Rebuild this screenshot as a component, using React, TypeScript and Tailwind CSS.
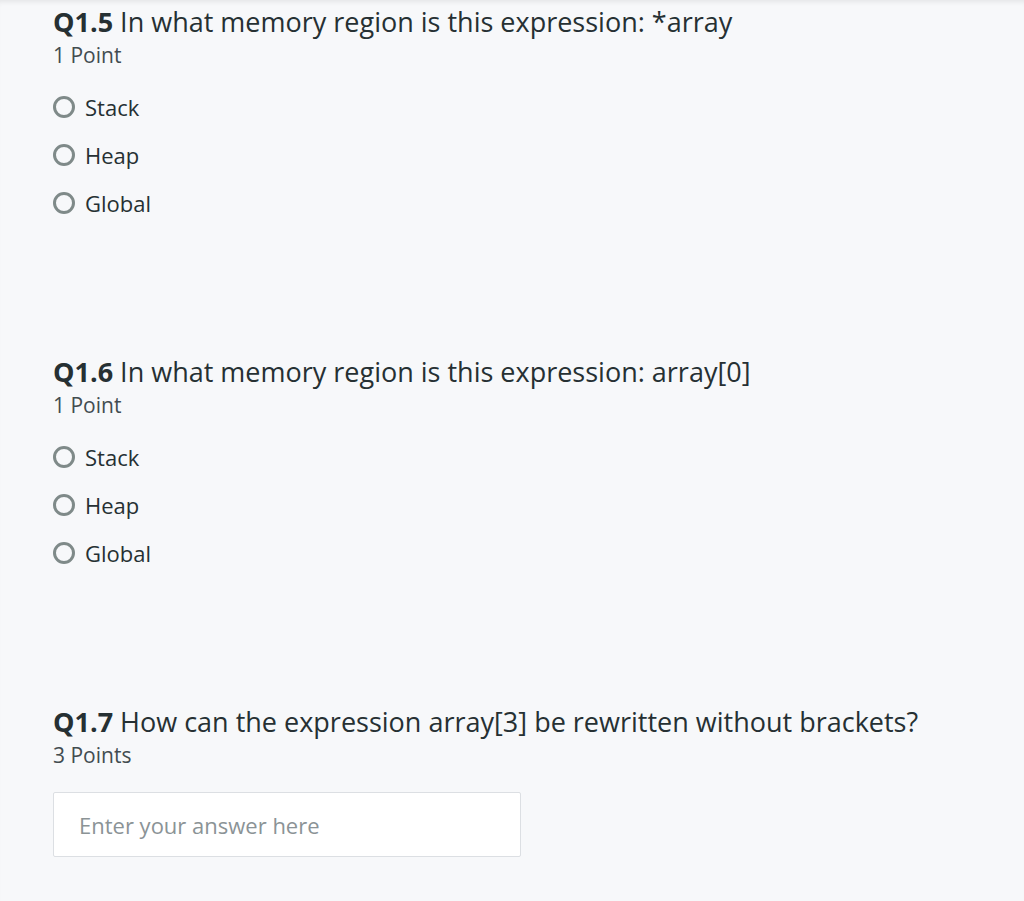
import React from 'react';

interface Question {
  num: string;
  text: string;
  points: string;
  options?: string[];
}

const questions: Question[] = [
  { num: 'Q1.5', text: 'In what memory region is this expression: *array', points: '1 Point', options: ['Stack', 'Heap', 'Global'] },
  { num: 'Q1.6', text: 'In what memory region is this expression: array[0]', points: '1 Point', options: ['Stack', 'Heap', 'Global'] },
  { num: 'Q1.7', text: 'How can the expression array[3] be rewritten without brackets?', points: '3 Points' },
];

function Radio({ label }: { label: string }) {
  return (
    <label className="flex items-center h-[48px] gap-[10px] cursor-pointer">
      <span className="w-[22px] h-[22px] rounded-full border-[3px] border-[#7f8a89] bg-transparent" />
      <span className="text-[22px] leading-[28px] text-[#263033]">{label}</span>
    </label>
  );
}

export default function App() {
  return (
    <div
      className="min-h-[901px] bg-[#f7f8fa] shadow-[inset_0_5px_5px_-3px_rgba(0,0,0,0.08)] pl-[53px] pt-[6px]"
      style={{ fontFamily: '"Open Sans", Lato, sans-serif' }}
    >
      {questions.map((q, i) => (
        <div key={q.num} className={i > 0 ? 'mt-[129px]' : ''}>
          <h2 className="text-[27px] leading-[32px] text-[#263033]">
            <span className="font-bold">{q.num}</span> {q.text}
          </h2>
          <div className="mt-[4px] text-[21px] leading-[26px] text-[#424c50]">{q.points}</div>
          {q.options ? (
            <div className="mt-[15px] flex flex-col">
              {q.options.map((o) => (
                <Radio key={o} label={o} />
              ))}
            </div>
          ) : (
            <input
              type="text"
              placeholder="Enter your answer here"
              className="mt-[24px] w-[468px] h-[65px] bg-white border border-[#dcdfe3] rounded-[2px] px-[25px] text-[22px] text-[#263033] placeholder:text-[#8b9396] outline-none"
            />
          )}
        </div>
      ))}
    </div>
  );
}
